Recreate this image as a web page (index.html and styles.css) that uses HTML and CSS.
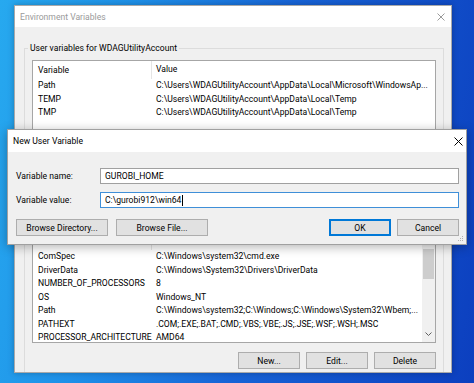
FILE: index.html
```html
<!DOCTYPE html>
<html lang="en">
<head>
  <meta charset="UTF-8">
  <title>Environment Variables</title>
  <link rel="stylesheet" href="styles.css">
</head>
<body>
  <div class="window env">
    <div class="titlebar">
      <span class="title">Environment Variables</span>
      <svg class="close" width="8" height="8" viewBox="0 0 8 8"><path d="M0.5 0.5L7.5 7.5M7.5 0.5L0.5 7.5"/></svg>
    </div>
    <div class="win-body">
      <fieldset class="group">
        <legend>User variables for WDAGUtilityAccount</legend>
        <div class="list user-list">
          <div class="rows">
            <div class="row head"><span class="name">Variable</span><span class="value">Value</span></div>
            <div class="row"><span class="name">Path</span><span class="value">C:\Users\WDAGUtilityAccount\AppData\Local\Microsoft\WindowsAp...</span></div>
            <div class="row"><span class="name">TEMP</span><span class="value">C:\Users\WDAGUtilityAccount\AppData\Local\Temp</span></div>
            <div class="row"><span class="name">TMP</span><span class="value">C:\Users\WDAGUtilityAccount\AppData\Local\Temp</span></div>
          </div>
        </div>
        <div class="btn-row">
          <button>New...</button>
          <button>Edit...</button>
          <button>Delete</button>
        </div>
      </fieldset>
      <fieldset class="group sys">
        <legend>System variables</legend>
        <div class="list sys-list">
          <div class="rows">
            <div class="row head"><span class="name">Variable</span><span class="value">Value</span></div>
            <div class="row"><span class="name">ComSpec</span><span class="value">C:\Windows\system32\cmd.exe</span></div>
            <div class="row"><span class="name">DriverData</span><span class="value">C:\Windows\System32\Drivers\DriverData</span></div>
            <div class="row"><span class="name">NUMBER_OF_PROCESSORS</span><span class="value">8</span></div>
            <div class="row"><span class="name">OS</span><span class="value">Windows_NT</span></div>
            <div class="row"><span class="name">Path</span><span class="value">C:\Windows\system32;C:\Windows;C:\Windows\System32\Wbem;...</span></div>
            <div class="row"><span class="name">PATHEXT</span><span class="value">.COM;.EXE;.BAT;.CMD;.VBS;.VBE;.JS;.JSE;.WSF;.WSH;.MSC</span></div>
            <div class="row"><span class="name">PROCESSOR_ARCHITECTURE</span><span class="value">AMD64</span></div>
          </div>
          <div class="scrollbar">
            <div class="arrow-up"></div>
            <div class="thumb"></div>
            <div class="track"></div>
            <div class="arrow-down">
              <svg width="7" height="4" viewBox="0 0 7 4"><path d="M0.5 0.5L3.5 3.5L6.5 0.5"/></svg>
            </div>
          </div>
        </div>
        <div class="btn-row">
          <button>New...</button>
          <button>Edit...</button>
          <button>Delete</button>
        </div>
      </fieldset>
    </div>
  </div>

  <div class="window dialog">
    <div class="titlebar">
      <span class="title">New User Variable</span>
      <svg class="close" width="9" height="9" viewBox="0 0 9 9"><path d="M0.5 0.5L8.5 8.5M8.5 0.5L0.5 8.5"/></svg>
    </div>
    <div class="dlg-body">
      <div class="field-row">
        <label>Variable name:</label>
        <div class="input">GUROBI_HOME</div>
      </div>
      <div class="field-row">
        <label>Variable value:</label>
        <div class="input focus">C:\gurobi912\win64<span class="caret"></span></div>
      </div>
      <div class="dlg-buttons">
        <button class="wide">Browse Directory...</button>
        <button class="wide">Browse File...</button>
        <span class="spacer"></span>
        <button class="default">OK</button>
        <button>Cancel</button>
      </div>
    </div>
    <svg class="grip" width="6" height="6" viewBox="0 0 6 6">
      <rect x="4" y="0" width="1" height="1"/>
      <rect x="2" y="2" width="1" height="1"/>
      <rect x="4" y="2" width="1" height="1"/>
      <rect x="0" y="4" width="1" height="1"/>
      <rect x="2" y="4" width="1" height="1"/>
      <rect x="4" y="4" width="1" height="1"/>
    </svg>
  </div>
</body>
</html>
```

FILE: styles.css
```css
* {
  box-sizing: border-box;
}

body {
  margin: 0;
  width: 474px;
  height: 383px;
  overflow: hidden;
  position: relative;
  font-family: Roboto, "Segoe UI", sans-serif;
  font-size: 8.6px;
  color: #000;
  background: linear-gradient(100deg, #27a9ef 0%, #1e90e8 25%, #1763d6 55%, #0c3fbf 100%);
}

/* windows on the desktop */
.window {
  position: absolute;
  background: #f0f0f0;
  border: 1px solid #a9a9a9;
  display: flex;
  flex-direction: column;
  overflow: hidden;
}

.env {
  left: 14px;
  top: 5px;
  width: 438px;
  height: 368px;
  box-shadow: 0 0 6px rgba(0, 0, 0, 0.25);
}

.dialog {
  left: 7px;
  top: 129px;
  width: 460px;
  height: 116px;
  border-color: #a0a0a0;
  box-shadow: 0 2px 10px rgba(0, 0, 0, 0.3);
}

.titlebar {
  background: #fff;
  display: flex;
  align-items: center;
  justify-content: space-between;
  flex-shrink: 0;
}

.env .titlebar {
  height: 21px;
  padding: 0 6px 0 5px;
  color: #9a9a9a;
}

.dialog .titlebar {
  height: 22px;
  padding: 0 3px 0 5px;
}

.close {
  fill: none;
  stroke: #9a9a9a;
  stroke-width: 1;
}

.dialog .close {
  stroke: #000;
}

/* main window content */
.win-body {
  padding: 15px 7px 0 9px;
}

.group {
  margin: 0;
  border: 1px solid #dcdcdc;
  padding: 5px 7px 7px 7px;
  min-width: 0;
}

.group legend {
  padding: 0 2px;
  margin-left: -4px;
  line-height: 13px;
}

.group.sys {
  margin-top: 2px;
}

.list {
  background: #fff;
  border: 1px solid #a6a6a6;
  overflow: hidden;
  display: flex;
}

.user-list {
  height: 120px;
}

.sys-list {
  height: 112px;
}

.rows {
  flex: 1;
  min-width: 0;
}

.row {
  display: flex;
  white-space: nowrap;
  line-height: 13.5px;
}

.row.head {
  height: 18px;
  align-items: center;
}

.row .name {
  width: 119px;
  padding-left: 5px;
  flex-shrink: 0;
}

.row.head .name {
  border-right: 1px solid #e5e5e5;
  height: 18px;
  line-height: 18px;
}

.row .value {
  padding-left: 4px;
}

.scrollbar {
  width: 13px;
  background: #f0f0f0;
  display: flex;
  flex-direction: column;
}

.arrow-up {
  height: 17px;
}

.thumb {
  height: 30px;
  margin: 0 1px;
  background: #cdcdcd;
}

.track {
  flex: 1;
}

.arrow-down {
  height: 17px;
  display: flex;
  align-items: center;
  justify-content: center;
}

.arrow-down svg {
  fill: none;
  stroke: #606060;
  stroke-width: 1;
}

.btn-row {
  display: flex;
  justify-content: flex-end;
  gap: 6px;
  margin-top: 6px;
}

.sys .btn-row {
  margin-top: 9px;
}

button {
  font: inherit;
  color: #000;
  height: 17px;
  width: 62px;
  padding: 0;
  background: #e1e1e1;
  border: 1px solid #adadad;
  border-radius: 0;
}

/* dialog content */
.dlg-body {
  padding: 16px 7px 9px 8px;
  display: flex;
  flex-direction: column;
  gap: 8px;
}

.field-row {
  display: flex;
  align-items: center;
}

.field-row label {
  width: 84px;
}

.input {
  flex: 1;
  height: 16px;
  background: #fff;
  border: 1px solid #a0a0a0;
  padding-left: 4px;
  line-height: 14px;
  display: flex;
  align-items: center;
}

.input.focus {
  border-color: #3f8fd8;
}

.caret {
  width: 1px;
  height: 11px;
  background: #000;
  margin-left: 1px;
}

.dlg-buttons {
  display: flex;
  gap: 8px;
  margin-top: 3px;
}

.dlg-buttons .wide {
  width: 92px;
}

.spacer {
  flex: 1;
}

.dlg-buttons .default {
  border-color: #0078d7;
  box-shadow: inset 0 0 0 1px #0078d7;
  margin-right: -2px;
}

.grip {
  position: absolute;
  right: 2px;
  bottom: 2px;
  fill: #b0b0b0;
}
```
